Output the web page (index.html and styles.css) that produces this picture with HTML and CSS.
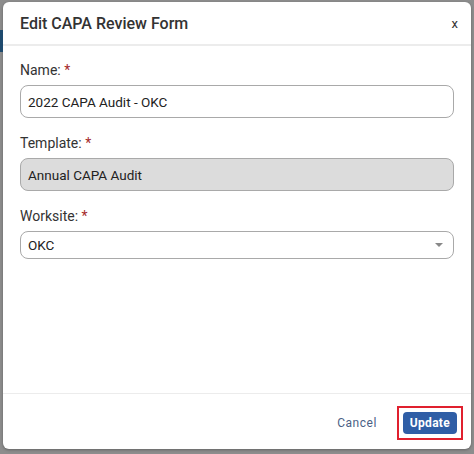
FILE: index.html
```html
<!DOCTYPE html>
<html>
<head>
<meta charset="utf-8">
<link rel="stylesheet" href="styles.css">
</head>
<body>
<div class="backdrop">
  <div class="peek peek-left"></div>
  <div class="modal">
    <div class="modal-header">
      <h1 class="modal-title">Edit CAPA Review Form</h1>
      <span class="close">x</span>
    </div>
    <div class="modal-body">
      <div class="field">
        <label class="label">Name: <span class="req">*</span></label>
        <div class="input">2022 CAPA Audit - OKC</div>
      </div>
      <div class="field">
        <label class="label">Template: <span class="req">*</span></label>
        <div class="input disabled">Annual CAPA Audit</div>
      </div>
      <div class="field">
        <label class="label">Worksite: <span class="req">*</span></label>
        <div class="input select">
          <span>OKC</span>
          <svg class="caret" width="10" height="6" viewBox="0 0 10 6"><path d="M1 1 L9 1 L5 5 Z" fill="#888"/></svg>
        </div>
      </div>
    </div>
    <div class="modal-footer">
      <span class="cancel">Cancel</span>
      <div class="highlight"><span class="btn">Update</span></div>
    </div>
  </div>
</div>
</body>
</html>
```
FILE: styles.css
```css
* { box-sizing: border-box; }
html, body { margin: 0; padding: 0; }
body {
  width: 474px;
  height: 454px;
  background: #8d8d8d;
  font-family: Roboto, "Noto Sans", sans-serif;
  color: #333;
  overflow: hidden;
}
.backdrop {
  position: relative;
  padding: 2px 3px 0 3px;
}
.peek-left {
  position: absolute;
  left: 0;
  top: 30px;
  width: 3px;
  height: 22px;
  background: #1e4a6e;
}
.modal {
  width: 468px;
  height: 447px;
  background: #fff;
  border-radius: 6px;
  display: flex;
  flex-direction: column;
  box-shadow: 0 1px 3px rgba(0,0,0,0.3);
}
.modal-header {
  height: 44px;
  flex: none;
  display: flex;
  align-items: center;
  justify-content: space-between;
  padding: 0 13px 0 17px;
  border-bottom: 2px solid #ececec;
}
.modal-title {
  margin: 0;
  margin-top: 1px;
  font-size: 16px;
  font-weight: 500;
  color: #333;
}
.close {
  font-size: 13px;
  color: #333;
  margin-top: 1px;
}
.modal-body {
  flex: 1;
  padding: 16px 17px 0 17px;
  display: flex;
  flex-direction: column;
  gap: 17px;
}
.field {
  display: flex;
  flex-direction: column;
  gap: 7px;
}
.label {
  font-size: 14px;
  line-height: 16px;
  color: #333;
}
.req { color: #a52a2a; }
.input {
  height: 33px;
  border: 1px solid #a9a9a9;
  border-radius: 8px;
  padding: 0 7px;
  display: flex;
  align-items: center;
  font-size: 13.5px;
  color: #222;
}
.input.disabled {
  background: #dcdcdc;
}
.input.select {
  height: 28px;
  justify-content: space-between;
  padding-right: 9px;
}
.caret { display: block; }
.modal-footer {
  height: 56px;
  flex: none;
  border-top: 1px solid #ececec;
  display: flex;
  align-items: center;
  justify-content: flex-end;
  padding: 0 8px 0 0;
  gap: 20px;
}
.cancel {
  font-size: 12px;
  color: #4a5f86;
  letter-spacing: 0.5px;
  margin-top: 2px;
}
.highlight {
  border: 2px solid #e0202e;
  padding: 4px;
  margin-top: 3px;
}
.btn {
  display: block;
  background: #2f5ea6;
  color: #fff;
  font-size: 12px;
  font-weight: 700;
  border-radius: 4px;
  padding: 5px 7px 4px;
  line-height: 13px;
  letter-spacing: 0.3px;
}
```
